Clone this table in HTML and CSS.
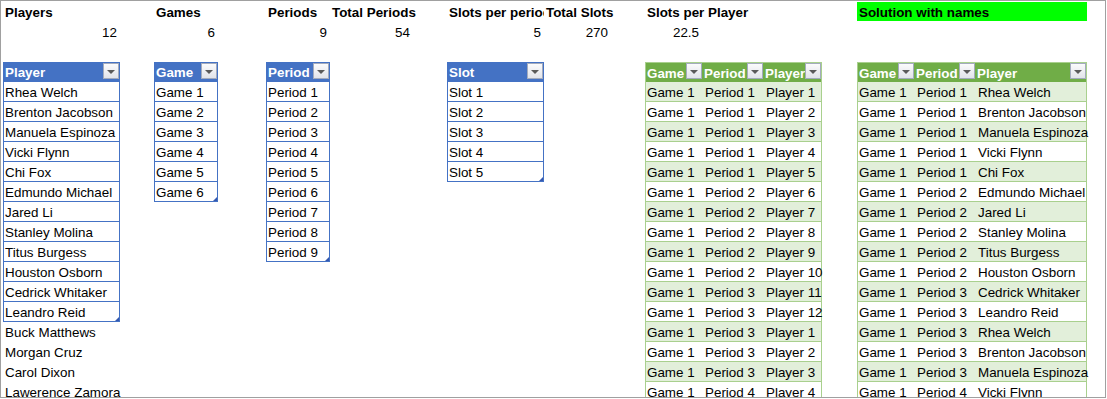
FILE: index.html
```html
<!DOCTYPE html>
<html lang="en">
<head>
<meta charset="utf-8">
<title>Sheet</title>
<link rel="stylesheet" href="styles.css">
</head>
<body>
<div class="sheet">
  <div class="grid">
    <div class="lbl c-a">Players</div>
    <div class="lbl c-c">Games</div>
    <div class="lbl c-e">Periods</div>
    <div class="lbl c-f">Total Periods</div>
    <div class="lbl c-h clip">Slots per period</div>
    <div class="lbl c-i">Total Slots</div>
    <div class="lbl c-klm">Slots per Player</div>
    <div class="lbl c-opq hl">Solution with names</div>

    <div class="num c-a r2">12</div>
    <div class="num c-c r2">6</div>
    <div class="num c-e r2">9</div>
    <div class="num c-f r2">54</div>
    <div class="num c-h r2">5</div>
    <div class="num c-i r2">270</div>
    <div class="num c-k r2">22.5</div>

    <div class="block c-a r4">
      <div class="btable">
        <div class="bhead"><span class="htxt">Player</span><span class="dd"></span></div>
        <div class="brow">Rhea Welch</div>
        <div class="brow">Brenton Jacobson</div>
        <div class="brow">Manuela Espinoza</div>
        <div class="brow">Vicki Flynn</div>
        <div class="brow">Chi Fox</div>
        <div class="brow">Edmundo Michael</div>
        <div class="brow">Jared Li</div>
        <div class="brow">Stanley Molina</div>
        <div class="brow">Titus Burgess</div>
        <div class="brow">Houston Osborn</div>
        <div class="brow">Cedrick Whitaker</div>
        <div class="brow last">Leandro Reid</div>
      </div>
      <div class="plain">Buck Matthews</div>
      <div class="plain">Morgan Cruz</div>
      <div class="plain">Carol Dixon</div>
      <div class="plain">Lawerence Zamora</div>
    </div>

    <div class="block c-c r4">
      <div class="btable">
        <div class="bhead"><span class="htxt">Game</span><span class="dd"></span></div>
        <div class="brow">Game 1</div>
        <div class="brow">Game 2</div>
        <div class="brow">Game 3</div>
        <div class="brow">Game 4</div>
        <div class="brow">Game 5</div>
        <div class="brow last">Game 6</div>
      </div>
    </div>

    <div class="block c-e r4">
      <div class="btable">
        <div class="bhead"><span class="htxt">Period</span><span class="dd"></span></div>
        <div class="brow">Period 1</div>
        <div class="brow">Period 2</div>
        <div class="brow">Period 3</div>
        <div class="brow">Period 4</div>
        <div class="brow">Period 5</div>
        <div class="brow">Period 6</div>
        <div class="brow">Period 7</div>
        <div class="brow">Period 8</div>
        <div class="brow last">Period 9</div>
      </div>
    </div>

    <div class="block c-h r4">
      <div class="btable">
        <div class="bhead"><span class="htxt">Slot</span><span class="dd"></span></div>
        <div class="brow">Slot 1</div>
        <div class="brow">Slot 2</div>
        <div class="brow">Slot 3</div>
        <div class="brow">Slot 4</div>
        <div class="brow last">Slot 5</div>
      </div>
    </div>

    <div class="block c-klm r4">
      <div class="gtable g1">
        <div class="ghead"><span class="htxt">Game</span><span class="dd"></span></div>
        <div class="ghead"><span class="htxt">Period</span><span class="dd"></span></div>
        <div class="ghead"><span class="htxt">Player</span><span class="dd"></span></div>

        <div class="gc band">Game 1</div><div class="gc band">Period 1</div><div class="gc band">Player 1</div>
        <div class="gc">Game 1</div><div class="gc">Period 1</div><div class="gc">Player 2</div>
        <div class="gc band">Game 1</div><div class="gc band">Period 1</div><div class="gc band">Player 3</div>
        <div class="gc">Game 1</div><div class="gc">Period 1</div><div class="gc">Player 4</div>
        <div class="gc band">Game 1</div><div class="gc band">Period 1</div><div class="gc band">Player 5</div>
        <div class="gc">Game 1</div><div class="gc">Period 2</div><div class="gc">Player 6</div>
        <div class="gc band">Game 1</div><div class="gc band">Period 2</div><div class="gc band">Player 7</div>
        <div class="gc">Game 1</div><div class="gc">Period 2</div><div class="gc">Player 8</div>
        <div class="gc band">Game 1</div><div class="gc band">Period 2</div><div class="gc band">Player 9</div>
        <div class="gc">Game 1</div><div class="gc">Period 2</div><div class="gc">Player 10</div>
        <div class="gc band">Game 1</div><div class="gc band">Period 3</div><div class="gc band">Player 11</div>
        <div class="gc">Game 1</div><div class="gc">Period 3</div><div class="gc">Player 12</div>
        <div class="gc band">Game 1</div><div class="gc band">Period 3</div><div class="gc band">Player 1</div>
        <div class="gc">Game 1</div><div class="gc">Period 3</div><div class="gc">Player 2</div>
        <div class="gc band">Game 1</div><div class="gc band">Period 3</div><div class="gc band">Player 3</div>
        <div class="gc">Game 1</div><div class="gc">Period 4</div><div class="gc">Player 4</div>
      </div>
    </div>

    <div class="block c-opq r4">
      <div class="gtable g2">
        <div class="ghead"><span class="htxt">Game</span><span class="dd"></span></div>
        <div class="ghead"><span class="htxt">Period</span><span class="dd"></span></div>
        <div class="ghead"><span class="htxt">Player</span><span class="dd"></span></div>

        <div class="gc band">Game 1</div><div class="gc band">Period 1</div><div class="gc band">Rhea Welch</div>
        <div class="gc">Game 1</div><div class="gc">Period 1</div><div class="gc">Brenton Jacobson</div>
        <div class="gc band">Game 1</div><div class="gc band">Period 1</div><div class="gc band">Manuela Espinoza</div>
        <div class="gc">Game 1</div><div class="gc">Period 1</div><div class="gc">Vicki Flynn</div>
        <div class="gc band">Game 1</div><div class="gc band">Period 1</div><div class="gc band">Chi Fox</div>
        <div class="gc">Game 1</div><div class="gc">Period 2</div><div class="gc">Edmundo Michael</div>
        <div class="gc band">Game 1</div><div class="gc band">Period 2</div><div class="gc band">Jared Li</div>
        <div class="gc">Game 1</div><div class="gc">Period 2</div><div class="gc">Stanley Molina</div>
        <div class="gc band">Game 1</div><div class="gc band">Period 2</div><div class="gc band">Titus Burgess</div>
        <div class="gc">Game 1</div><div class="gc">Period 2</div><div class="gc">Houston Osborn</div>
        <div class="gc band">Game 1</div><div class="gc band">Period 3</div><div class="gc band">Cedrick Whitaker</div>
        <div class="gc">Game 1</div><div class="gc">Period 3</div><div class="gc">Leandro Reid</div>
        <div class="gc band">Game 1</div><div class="gc band">Period 3</div><div class="gc band">Rhea Welch</div>
        <div class="gc">Game 1</div><div class="gc">Period 3</div><div class="gc">Brenton Jacobson</div>
        <div class="gc band">Game 1</div><div class="gc band">Period 3</div><div class="gc band">Manuela Espinoza</div>
        <div class="gc">Game 1</div><div class="gc">Period 4</div><div class="gc">Vicki Flynn</div>
      </div>
    </div>
  </div>
</div>
</body>
</html>
```

FILE: styles.css
```css
html, body {
  margin: 0;
  padding: 0;
  background: #ffffff;
}

body {
  font-family: "Liberation Sans", Arial, sans-serif;
  font-size: 13.4px;
  color: #000000;
}

.sheet {
  box-sizing: border-box;
  width: 1106px;
  height: 398px;
  border: 1px solid #a0a0a0;
  overflow: hidden;
  background: #ffffff;
}

.grid {
  display: grid;
  padding: 1px 0 0 2px;
  grid-template-columns:
    [a] 117px [b] 34px [c] 64px [d] 48px [e] 64px [f] 83px [g] 34px
    [h] 97px [i] 67px [j] 34px [k] 57px [l] 61px [m] 59px [n] 35px
    [o] 57px [p] 61px [q] 112px [end];
  grid-template-rows: 20px 20px 20px auto;
  line-height: 22px;
  white-space: nowrap;
}

.c-a { grid-column: a / b; }
.c-c { grid-column: c / d; }
.c-e { grid-column: e / f; }
.c-f { grid-column: f / g; }
.c-h { grid-column: h / i; }
.c-i { grid-column: i / j; }
.c-k { grid-column: k / l; }
.c-klm { grid-column: k / n; }
.c-opq { grid-column: o / end; }

.r2 { grid-row: 2; }
.r4 { grid-row: 4; align-self: start; }

.lbl {
  grid-row: 1;
  height: 20px;
  font-weight: bold;
  padding-left: 2px;
}

.clip { overflow: hidden; }

.hl {
  background: #00ff00;
  height: 19px;
}

.num {
  height: 20px;
  text-align: right;
  padding-right: 3px;
}

/* blue tables */
.btable {
  border-left: 1px solid #4472c4;
  border-right: 1px solid #4472c4;
}

.bhead {
  display: flex;
  height: 20px;
  background: #4472c4;
  color: #ffffff;
  font-weight: bold;
}

.htxt {
  flex: 1 1 auto;
  min-width: 0;
  height: 20px;
  overflow: hidden;
  padding-left: 1px;
}

.dd {
  flex: 0 0 auto;
  box-sizing: border-box;
  width: 16px;
  height: 16px;
  margin-top: 1px;
  border: 1px solid #a3abbd;
  background: linear-gradient(#fbfbfc, #e2e4ea);
  display: flex;
  align-items: center;
  justify-content: center;
}

.dd::before {
  content: "";
  width: 0;
  height: 0;
  border-left: 4px solid transparent;
  border-right: 4px solid transparent;
  border-top: 4px solid #5a5a5a;
  margin-top: 1px;
}

.brow {
  box-sizing: border-box;
  height: 20px;
  border-bottom: 1px solid #4472c4;
  padding-left: 1px;
  position: relative;
}

.brow.last::after {
  content: "";
  position: absolute;
  right: 0;
  bottom: 0;
  width: 0;
  height: 0;
  border-left: 4px solid transparent;
  border-bottom: 4px solid #3558b0;
}

.plain {
  height: 20px;
  padding-left: 2px;
}

/* green tables */
.gtable {
  display: grid;
  border: 1px solid #a9d08e;
  border-bottom: none;
}

.g1 { grid-template-columns: 56px 61px 58px; }
.g2 { grid-template-columns: 56px 61px 111px; }

.ghead {
  display: flex;
  height: 19px;
  line-height: 21px;
  background: #70ad47;
  color: #ffffff;
  font-weight: bold;
}

.ghead .htxt { padding-left: 2px; height: 19px; }
.ghead:first-child .htxt { padding-left: 1px; }
.ghead .dd { margin-top: 0; }

.gc {
  box-sizing: border-box;
  height: 20px;
  border-bottom: 1px solid #a9d08e;
  padding-left: 3px;
}

.gc:nth-child(3n+1) { padding-left: 1px; }

.gc.band { background: #e2efda; }
```
